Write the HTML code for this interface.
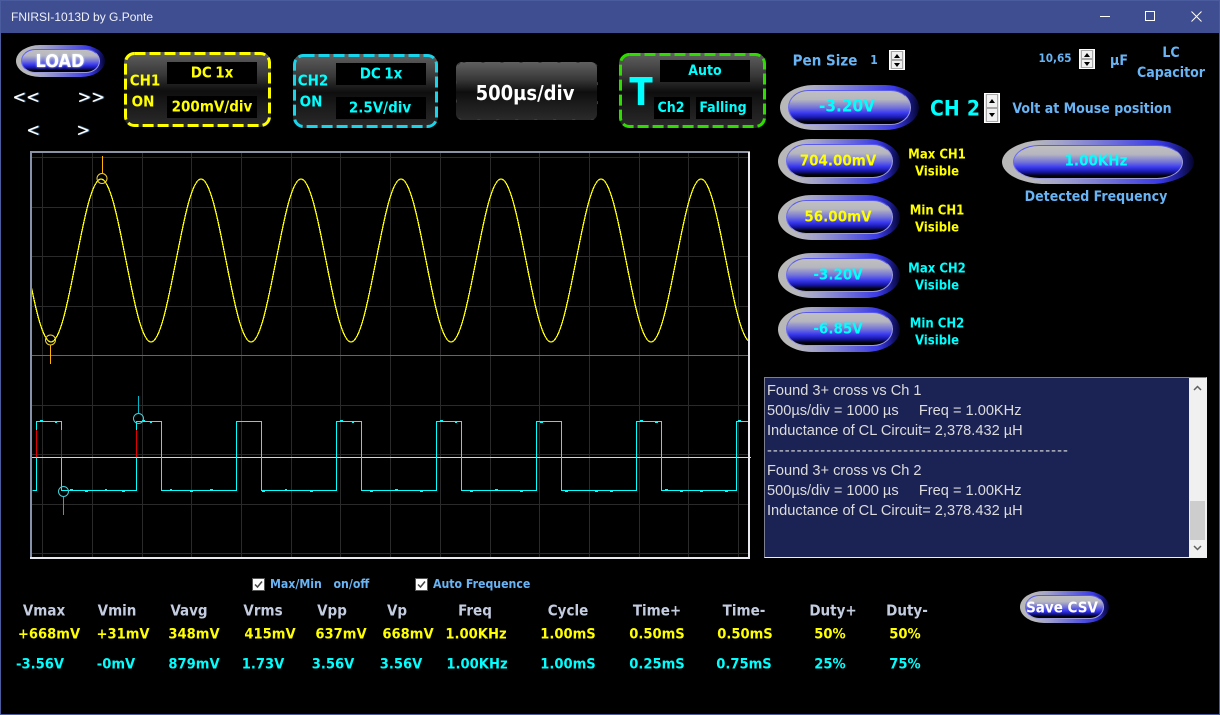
<!DOCTYPE html>
<html><head><meta charset="utf-8"><title>FNIRSI-1013D by G.Ponte</title>
<style>
html,body{margin:0;padding:0;background:#000;width:1220px;height:715px;overflow:hidden}
#w{position:absolute;left:0;top:0;width:1218px;height:713px;border:1px solid #4a5b9e;background:#000;overflow:hidden;font-family:"DejaVu Sans Condensed","DejaVu Sans",sans-serif;font-stretch:condensed;font-weight:bold}
#o{position:absolute;left:-1px;top:-1px;width:1220px;height:715px}
#tb{position:absolute;left:0;top:0;width:1220px;height:33px;background:#3f4e90}
.a{position:absolute;white-space:pre;line-height:1}
.c{position:absolute;white-space:pre;line-height:1;transform:translate(-50%,calc(-50% + 2px));font-size:14.6px}
.b{color:#68b4f4}.y{color:#ff0}.q{color:#0ff}.g{color:#c4cce0}
.pl{position:absolute;border-radius:34px/50%;background:linear-gradient(90deg,#b8b8b8 0,#b8b8bc 16%,#a0a0cc 32%,#7070d8 56%,#3a3ae4 82%,#1c1c90 92%,#04042c 100%)}
.pi{position:absolute;border-radius:20px/50%;box-sizing:border-box;border:1px solid;border-color:#5a5af0 #9c9cdc #9c9cdc #6a6af0;background:linear-gradient(180deg,#c0c0c0 0,#b6b6c0 26%,#7474d8 50%,#3c3cf0 66%,#1818b0 80%,#000 94%)}
.p{position:absolute;box-sizing:border-box;border-radius:11px;background:linear-gradient(180deg,#606060 0,#383838 30%,#0e0e0e 52%,#1a1a1a 70%,#2a2a2a 100%)}
.k{position:absolute;background:#000}
.s{position:absolute;background:#e6e6e6;border:1px solid #fff;box-sizing:border-box}
.s i{position:absolute;left:1px;right:1px;background:#f0f0f0;border:1px solid #a8a8a8;box-sizing:border-box}
.s u{position:absolute;left:4px;width:0;height:0;border-left:3px solid transparent;border-right:3px solid transparent}
.cb{position:absolute;width:11px;height:11px;background:#fff;border:1px solid #555}
.nv{font-size:18px!important;font-weight:normal;color:#fff;text-shadow:1px 0 1px #8cc8ff}
.ds{word-spacing:-3px}
</style></head><body>
<div id="w"><div id="o">
<div id="tb"></div>
<div class="a" style="left:11px;top:11px;font:12px/12px 'Liberation Sans',sans-serif;color:#eef0f8">FNIRSI-1013D by G.Ponte</div>
<svg style="position:absolute;left:1090px;top:5px" width="120" height="24" shape-rendering="crispEdges" fill="none" stroke="#fff"><path d="M10 11.5H20"/><rect x="55.5" y="6.5" width="9" height="9"/><path shape-rendering="auto" d="M101.5 6.5l10 10M111.5 6.5l-10 10"/></svg>

<!-- LOAD -->
<div class="pl" style="left:16px;top:45px;width:89px;height:32px;border-radius:24px/50%"></div>
<div class="pi" style="left:21px;top:49px;width:79px;height:24px;border-radius:14px/50%"></div>
<div class="c" style="left:60px;top:60px;font-size:18px;color:#fff;text-shadow:0 0 2px #cfe0ff">LOAD</div>
<div class="c nv" style="left:26px;top:96px">&lt;&lt;</div>
<div class="c nv" style="left:91px;top:96px">&gt;&gt;</div>
<div class="c nv" style="left:33px;top:129px">&lt;</div>
<div class="c nv" style="left:83px;top:129px">&gt;</div>

<!-- CH1 -->
<div class="p" style="left:124px;top:52px;width:147px;height:75px"></div>
<svg style="position:absolute;left:124px;top:52px" width="147" height="75" fill="none"><rect x="1.5" y="1.5" width="144" height="72" rx="9" stroke="#ff0" stroke-width="3" stroke-dasharray="11 4"/></svg>
<div class="k" style="left:167px;top:62px;width:90px;height:22px"></div>
<div class="k" style="left:167px;top:96px;width:90px;height:22px"></div>
<div class="c y ds" style="left:212px;top:71px;font-size:15px">DC  1x</div>
<div class="c y" style="left:212px;top:105px;font-size:15px">200mV/div</div>
<div class="c y" style="left:145px;top:79px;font-size:15px">CH1</div>
<div class="c y" style="left:143px;top:100px;font-size:15px">ON</div>

<!-- CH2 -->
<div class="p" style="left:293px;top:54px;width:145px;height:74px"></div>
<svg style="position:absolute;left:293px;top:54px" width="145" height="74" fill="none"><rect x="1.5" y="1.5" width="142" height="71" rx="9" stroke="#19d4ea" stroke-width="3" stroke-dasharray="11 4"/></svg>
<div class="k" style="left:336px;top:63px;width:90px;height:22px"></div>
<div class="k" style="left:336px;top:97px;width:90px;height:22px"></div>
<div class="c q ds" style="left:381px;top:72px;font-size:15px">DC  1x</div>
<div class="c q" style="left:380px;top:106px;font-size:15px">2.5V/div</div>
<div class="c q" style="left:313px;top:79px;font-size:15px">CH2</div>
<div class="c q" style="left:311px;top:100px;font-size:15px">ON</div>

<!-- timebase -->
<div class="p" style="left:456px;top:62px;width:141px;height:58px;border-radius:6px"></div>
<svg style="position:absolute;left:452px;top:58px" width="150" height="66" fill="none"><rect x="4.5" y="4.5" width="141" height="57" rx="6" stroke="#3c3c3c" stroke-dasharray="3 16"/></svg>
<div class="c" style="left:525px;top:91px;font-size:20px;color:#fff">500µs/div</div>

<!-- Trigger -->
<div class="p" style="left:619px;top:53px;width:147px;height:75px"></div>
<svg style="position:absolute;left:619px;top:53px" width="147" height="75" fill="none"><rect x="1.5" y="1.5" width="144" height="72" rx="9" stroke="#2fdc00" stroke-width="3" stroke-dasharray="11 4"/></svg>
<div class="k" style="left:660px;top:60px;width:90px;height:22px"></div>
<div class="k" style="left:654px;top:97px;width:36px;height:22px"></div>
<div class="k" style="left:696px;top:97px;width:56px;height:22px"></div>
<div class="c q" style="left:705px;top:69px;font-size:14px">Auto</div>
<div class="c q" style="left:671px;top:106px;font-size:14px">Ch2</div>
<div class="c q" style="left:723px;top:106px;font-size:14px">Falling</div>
<div class="c q" style="left:641px;top:90px;font-size:38px">T</div>

<!-- right labels -->
<div class="c b" style="left:825px;top:59px;font-size:15px">Pen Size</div>
<div class="c b" style="left:874px;top:58px;font-size:12px">1</div>
<div class="s" style="left:889px;top:50px;width:16px;height:20px"><i style="top:0;height:9px"></i><i style="top:9px;height:9px"></i><u style="top:3px;border-bottom:4px solid #000"></u><u style="top:12px;border-top:4px solid #000"></u></div>
<div class="c b" style="left:1055px;top:57px;font-size:11.6px">10,65</div>
<div class="s" style="left:1079px;top:49px;width:16px;height:20px"><i style="top:0;height:9px"></i><i style="top:9px;height:9px"></i><u style="top:3px;border-bottom:4px solid #000"></u><u style="top:12px;border-top:4px solid #000"></u></div>
<div class="c b" style="left:1119px;top:59px;font-size:14px">µF</div>
<div class="c b" style="left:1171px;top:51px;font-size:14px">LC</div>
<div class="c b" style="left:1171px;top:71px;font-size:14px">Capacitor</div>

<!-- volt pill -->
<div class="pl" style="left:780px;top:85px;width:139px;height:45px"></div>
<div class="pi" style="left:788px;top:90px;width:123px;height:35px"></div>
<div class="c q" style="left:847px;top:105px;font-size:17px">-3.20V</div>
<div class="c q ds" style="left:955px;top:107px;font-size:21px">CH  2</div>
<div class="s" style="left:984px;top:93px;width:16px;height:30px"><i style="top:0;height:14px"></i><i style="top:14px;height:14px"></i><u style="top:5px;border-bottom:4px solid #000"></u><u style="top:19px;border-top:4px solid #000"></u></div>
<div class="c b" style="left:1092px;top:107px;font-size:14px">Volt at Mouse position</div>

<div class="pl" style="left:778px;top:139px;width:122px;height:45px"></div>
<div class="pi" style="left:786px;top:144px;width:107px;height:34px"></div>
<div class="c y" style="left:838px;top:159px;font-size:15px">704.00mV</div>
<div class="c y" style="left:937px;top:153px;font-size:13px">Max CH1</div>
<div class="c y" style="left:937px;top:170px;font-size:13px">Visible</div>

<div class="pl" style="left:778px;top:195px;width:122px;height:45px"></div>
<div class="pi" style="left:786px;top:200px;width:107px;height:34px"></div>
<div class="c y" style="left:838px;top:215px;font-size:15px">56.00mV</div>
<div class="c y" style="left:937px;top:209px;font-size:13px">Min CH1</div>
<div class="c y" style="left:937px;top:226px;font-size:13px">Visible</div>

<div class="pl" style="left:778px;top:253px;width:122px;height:45px"></div>
<div class="pi" style="left:786px;top:258px;width:107px;height:34px"></div>
<div class="c q" style="left:838px;top:273px;font-size:15px">-3.20V</div>
<div class="c q" style="left:937px;top:267px;font-size:13px">Max CH2</div>
<div class="c q" style="left:937px;top:284px;font-size:13px">Visible</div>

<div class="pl" style="left:778px;top:307px;width:122px;height:45px"></div>
<div class="pi" style="left:786px;top:312px;width:107px;height:34px"></div>
<div class="c q" style="left:838px;top:327px;font-size:15px">-6.85V</div>
<div class="c q" style="left:937px;top:322px;font-size:13px">Min CH2</div>
<div class="c q" style="left:937px;top:339px;font-size:13px">Visible</div>

<div class="pl" style="left:1002px;top:140px;width:192px;height:44px;border-radius:44px/50%"></div>
<div class="pi" style="left:1013px;top:145px;width:170px;height:34px;border-radius:26px/50%"></div>
<div class="c q" style="left:1096px;top:159px;font-size:15px">1.00KHz</div>
<div class="c b" style="left:1096px;top:195px;font-size:14px">Detected Frequency</div>

<!-- plot -->
<svg style="position:absolute;left:0;top:0" width="1220" height="715" fill="none" shape-rendering="crispEdges">
<defs><clipPath id="cp"><rect x="32" y="153" width="717" height="404"/></clipPath></defs>
<g stroke="#2a2a2a">
<path d="M42.5 153V557M92.5 153V557M142.5 153V557M191.5 153V557M241.5 153V557M291.5 153V557M340.5 153V557M390.5 153V557M440.5 153V557M490.5 153V557M539.5 153V557M589.5 153V557M639.5 153V557M688.5 153V557M738.5 153V557"/>
<path d="M32 157.5H749M32 207.5H749M32 256.5H749M32 306.5H749M32 405.5H749M32 454.5H749M32 504.5H749M32 553.5H749"/>
</g>
<path d="M32 355.5H749" stroke="#666"/>
<path d="M31 457.5H751" stroke="#a0f0d8"/>
<g clip-path="url(#cp)">
<path stroke="#ff0" stroke-width="1.3" d="M1 179c18.2 0 31.8 163 50 163s31.8 -163 50 -163s31.8 163 50 163s31.8 -163 50 -163s31.8 163 50 163s31.8 -163 50 -163s31.8 163 50 163s31.8 -163 50 -163s31.8 163 50 163s31.8 -163 50 -163s31.8 163 50 163s31.8 -163 50 -163s31.8 163 50 163s31.8 -163 50 -163s31.8 163 50 163"/>
<path stroke="#0ff" d="M32.5 490.5H36.5V421.5H61.5V490.5H136.5V421.5H161.5V490.5H236.5V421.5H261.5V490.5H336.5V421.5H361.5V490.5H436.5V421.5H461.5V490.5H536.5V421.5H561.5V490.5H636.5V421.5H661.5V490.5H736.5V421.5H749"/>
<path stroke="#0ff" d="M40 420.5h3M55 422.5h2M70 489.5h3M85 491.5h3M105 489.5h2M122 491.5h3M142 420.5h3M150 422.5h2M170 489.5h2M190 491.5h3M210 489.5h3M262 491.5h3M285 489.5h2M310 491.5h3M340 420.5h3M352 422.5h2M370 491.5h3M395 489.5h3M420 491.5h3M440 420.5h3M455 422.5h2M470 491.5h3M495 489.5h3M520 491.5h3M540 422.5h3M565 491.5h3M595 491.5h3M610 491.5h3M640 420.5h3M655 422.5h3M665 489.5h3M680 491.5h3M700 491.5h3M725 491.5h3M738 420.5h3"/>
<path stroke="#e00000" d="M36.5 430V457M61.5 430V457M136.5 430V457"/>
</g>
<rect x="30" y="151" width="2" height="407" fill="#8592aa"/>
<rect x="30" y="151" width="720" height="2" fill="#8a92a4"/>
<rect x="748" y="152" width="2" height="407" fill="#e8e8ee"/>
<rect x="30" y="557" width="720" height="2" fill="#e8e8ee"/>
</svg>
<svg style="position:absolute;left:0;top:0" width="1220" height="715" fill="none">
<circle cx="102" cy="178.5" r="5" stroke="#f0d040"/><path d="M102.5 156V173" stroke="#ffb400"/>
<circle cx="50.5" cy="340" r="5" stroke="#f0d040"/><path d="M50.5 345V364" stroke="#ffb400"/>
<circle cx="138.5" cy="418.5" r="5" stroke="#40d0d8"/><path d="M138.5 396V413" stroke="#00b8c8"/>
<circle cx="63.5" cy="491.5" r="5" stroke="#40d0d8"/><path d="M63.5 497V515" stroke="#00b8c8"/>
</svg>

<!-- log -->
<div style="position:absolute;left:764px;top:377px;width:443px;height:181px;box-sizing:border-box;background:#1b2354;border:1px solid;border-color:#7c8090 #f0f0f0 #f0f0f0 #7c8090"></div>
<div style="position:absolute;left:1189px;top:378px;width:17px;height:179px;background:#f0f0f0"></div>
<div style="position:absolute;left:1190px;top:501px;width:15px;height:39px;background:#cdcdcd"></div>
<svg style="position:absolute;left:1189px;top:378px" width="17" height="179" fill="none" stroke="#606060" stroke-width="1.5"><path d="M5 12l3.5-3.5L12 12M5 168l3.5 3.5L12 168"/></svg>
<div class="a" style="left:767px;top:381px;font:normal 14.6px/20px 'Liberation Sans',sans-serif;color:#dcdcdc">Found 3+ cross vs Ch 1
500µs/div = 1000 µs     Freq = 1.00KHz
Inductance of CL Circuit= 2,378.432 µH
<span style="letter-spacing:1.06px">---------------------------------------------------</span>
Found 3+ cross vs Ch 2
500µs/div = 1000 µs     Freq = 1.00KHz
Inductance of CL Circuit= 2,378.432 µH</div>

<!-- checkboxes -->
<div class="cb" style="left:252px;top:578px"></div>
<svg style="position:absolute;left:252px;top:578px" width="13" height="13" fill="none" stroke="#444" stroke-width="1.5"><path d="M3 6.5l2.5 2.5L10 3.5"/></svg>
<div class="a b" style="left:270px;top:578px;font-size:12.2px;word-spacing:2px">Max/Min  on/off</div>
<div class="cb" style="left:415px;top:578px"></div>
<svg style="position:absolute;left:415px;top:578px" width="13" height="13" fill="none" stroke="#444" stroke-width="1.5"><path d="M3 6.5l2.5 2.5L10 3.5"/></svg>
<div class="a b" style="left:433px;top:578px;font-size:12.2px">Auto Frequence</div>

<!-- table -->
<div class="c g" style="left:44px;top:609px;font-size:15px">Vmax</div>
<div class="c g" style="left:117px;top:609px;font-size:15px">Vmin</div>
<div class="c g" style="left:189px;top:609px;font-size:15px">Vavg</div>
<div class="c g" style="left:263px;top:609px;font-size:15px">Vrms</div>
<div class="c g" style="left:332px;top:609px;font-size:15px">Vpp</div>
<div class="c g" style="left:397px;top:609px;font-size:15px">Vp</div>
<div class="c g" style="left:475px;top:609px;font-size:15px">Freq</div>
<div class="c g" style="left:568px;top:609px;font-size:15px">Cycle</div>
<div class="c g" style="left:657px;top:609px;font-size:15px">Time+</div>
<div class="c g" style="left:744px;top:609px;font-size:15px">Time-</div>
<div class="c g" style="left:833px;top:609px;font-size:15px">Duty+</div>
<div class="c g" style="left:907px;top:609px;font-size:15px">Duty-</div>

<div class="c y" style="left:49px;top:633px">+668mV</div>
<div class="c y" style="left:123px;top:633px">+31mV</div>
<div class="c y" style="left:194px;top:633px">348mV</div>
<div class="c y" style="left:270px;top:633px">415mV</div>
<div class="c y" style="left:341px;top:633px">637mV</div>
<div class="c y" style="left:408px;top:633px">668mV</div>
<div class="c y" style="left:476px;top:633px">1.00KHz</div>
<div class="c y" style="left:568px;top:633px">1.00mS</div>
<div class="c y" style="left:657px;top:633px">0.50mS</div>
<div class="c y" style="left:745px;top:633px">0.50mS</div>
<div class="c y" style="left:830px;top:633px">50%</div>
<div class="c y" style="left:905px;top:633px">50%</div>

<div class="c q" style="left:40px;top:663px">-3.56V</div>
<div class="c q" style="left:116px;top:663px">-0mV</div>
<div class="c q" style="left:194px;top:663px">879mV</div>
<div class="c q" style="left:263px;top:663px">1.73V</div>
<div class="c q" style="left:333px;top:663px">3.56V</div>
<div class="c q" style="left:401px;top:663px">3.56V</div>
<div class="c q" style="left:477px;top:663px">1.00KHz</div>
<div class="c q" style="left:568px;top:663px">1.00mS</div>
<div class="c q" style="left:657px;top:663px">0.25mS</div>
<div class="c q" style="left:744px;top:663px">0.75mS</div>
<div class="c q" style="left:830px;top:663px">25%</div>
<div class="c q" style="left:905px;top:663px">75%</div>

<div class="pl" style="left:1020px;top:591px;width:89px;height:32px;border-radius:24px/50%"></div>
<div class="pi" style="left:1025px;top:595px;width:79px;height:24px;border-radius:14px/50%"></div>
<div class="c" style="left:1062px;top:606px;font-size:15px;color:#fff">Save CSV</div>
</div></div>
</body></html>
